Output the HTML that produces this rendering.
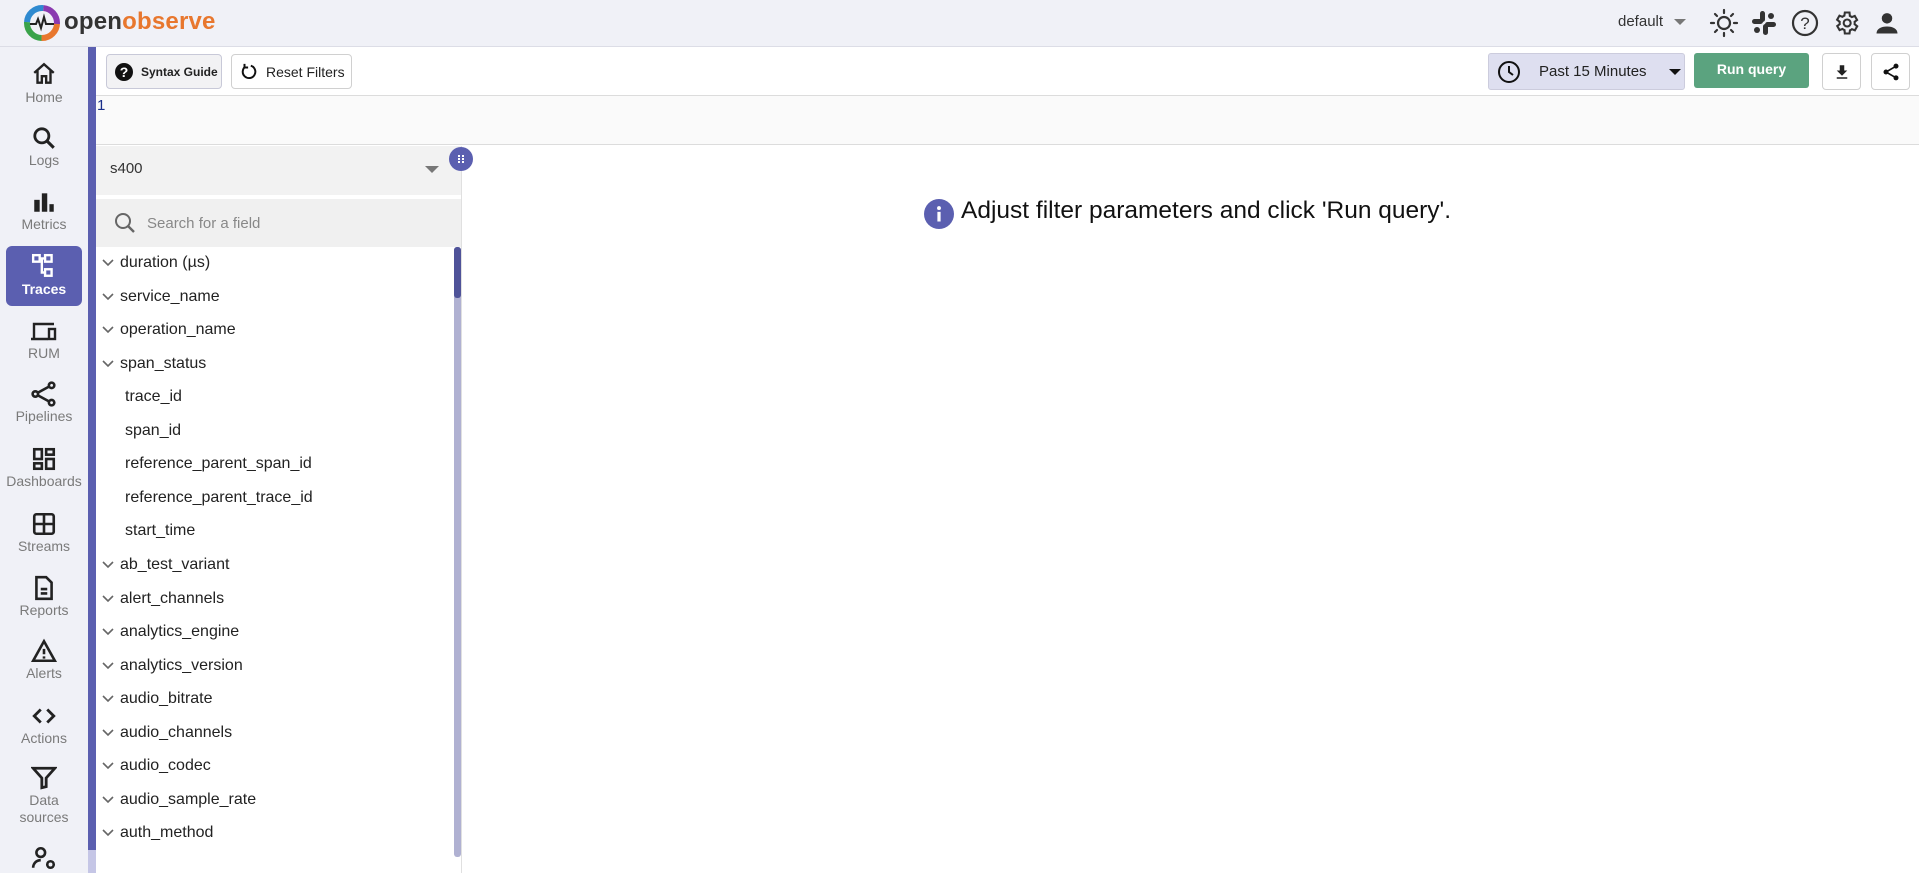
<!DOCTYPE html>
<html><head><meta charset="utf-8"><style>
*{box-sizing:border-box;margin:0;padding:0}
body{width:1919px;height:873px;overflow:hidden;font-family:"Liberation Sans",sans-serif;background:#fff;position:relative;color:#222}
.abs{position:absolute}
#hdr{left:0;top:0;width:1919px;height:47px;background:#f0f1f7;border-bottom:1px solid #dcdde6}
#side{left:0;top:47px;width:88px;height:826px;background:#f0f1f7}
#strip{left:88px;top:47px;width:8px;height:803px;background:#5b5fb0}
#strip2{left:88px;top:850px;width:8px;height:23px;background:#c5c6e6}
.nav{position:absolute;left:0;width:88px;text-align:center;color:#7a7a7a;font-size:14px;white-space:nowrap}
.ic{position:absolute;left:31px}
.btn{position:absolute;border:1px solid #d0d0d0;border-radius:4px;background:#fff;font-size:14px;display:flex;align-items:center;white-space:nowrap}
.f{position:absolute;left:120px;font-size:16px;color:#222}
.c{position:absolute;left:102px;width:12px;height:8px}
.s{left:125px}
</style></head><body>
<div id="hdr" class="abs"></div>
<svg class="abs" style="left:23px;top:4px" width="38" height="38" viewBox="0 0 38 38">
<circle cx="19" cy="19" r="15" fill="none" stroke="#e8772e" stroke-width="6" stroke-dasharray="24 71"/>
<circle cx="19" cy="19" r="15" fill="none" stroke="#3aa34a" stroke-width="6" stroke-dasharray="24 71" stroke-dashoffset="-24"/>
<circle cx="19" cy="19" r="15" fill="none" stroke="#2f8ad0" stroke-width="6" stroke-dasharray="24 71" stroke-dashoffset="-48"/>
<circle cx="19" cy="19" r="15" fill="none" stroke="#8a3ab0" stroke-width="6" stroke-dasharray="24 71" stroke-dashoffset="-72"/>
<path d="M7 20h6l2-5 3 9 3-11 2 7h8" fill="none" stroke="#222" stroke-width="2"/></svg>
<div class="abs" style="left:64px;top:8px;font-size:24px;font-weight:bold;letter-spacing:0.2px"><span style="color:#333">open</span><span style="color:#e8772e">observe</span></div>
<div class="abs" style="left:1618px;top:13px;font-size:15px;color:#333">default</div>
<div class="abs" style="left:1674px;top:19px;border:6px solid transparent;border-top:6px solid #777"></div>
<svg class="abs" style="left:1709px;top:8px" width="30" height="30" viewBox="0 0 30 30"><circle cx="15" cy="15" r="6" fill="none" stroke="#333" stroke-width="2.2"/><g stroke="#333" stroke-width="2.2" stroke-linecap="round"><path d="M15 2v3M15 25v3M2 15h3M25 15h3M6 6l2 2M22 22l2 2M6 24l2-2M22 8l2-2"/></g></svg>
<svg class="abs" style="left:1751px;top:10px" width="26" height="26" viewBox="0 0 26 26" fill="#333"><rect x="9" y="1" width="5" height="11" rx="2.5"/><rect x="1" y="9" width="11" height="5" rx="2.5"/><rect x="12" y="14" width="5" height="11" rx="2.5"/><rect x="14" y="12" width="11" height="5" rx="2.5"/><circle cx="20" cy="6" r="3"/><circle cx="6" cy="20" r="3"/></svg>
<svg class="abs" style="left:1791px;top:9px" width="28" height="28" viewBox="0 0 28 28"><circle cx="14" cy="14" r="12" fill="none" stroke="#333" stroke-width="2.2"/><text x="14" y="20" text-anchor="middle" font-size="17" font-family="Liberation Sans" fill="#333">?</text></svg>
<svg class="abs" style="left:1832px;top:9px" width="28" height="28" viewBox="0 0 24 24"><path d="M19.4 13a7.5 7.5 0 000-2l2.1-1.6-2-3.5-2.5 1a7 7 0 00-1.7-1L15 3h-4l-.4 2.7a7 7 0 00-1.7 1l-2.5-1-2 3.5L6.6 11a7.5 7.5 0 000 2l-2.1 1.6 2 3.5 2.5-1a7 7 0 001.7 1L11 21h4l.4-2.7a7 7 0 001.7-1l2.5 1 2-3.5z" fill="none" stroke="#333" stroke-width="1.8"/><circle cx="13" cy="12" r="3" fill="none" stroke="#333" stroke-width="1.8"/></svg>
<svg class="abs" style="left:1873px;top:9px" width="28" height="28" viewBox="0 0 24 24" fill="#333"><circle cx="12" cy="8" r="4.5"/><path d="M3 21c0-4 4-6 9-6s9 2 9 6z"/></svg>

<div id="side" class="abs"></div>
<div id="strip" class="abs"></div><div id="strip2" class="abs"></div>
<svg class="ic" style="top:61px" width="26" height="26" viewBox="0 0 24 24"><path d="M3 11L12 3l9 8M6 9v11h4v-6h4v6h4V9" fill="none" stroke="#222" stroke-width="2.2"/></svg><div class="nav" style="top:89px">Home</div>
<svg class="ic" style="top:125px" width="26" height="26" viewBox="0 0 24 24"><circle cx="10" cy="10" r="6.5" fill="none" stroke="#222" stroke-width="2.6"/><path d="M15 15l6 6" stroke="#222" stroke-width="2.8"/></svg><div class="nav" style="top:152px">Logs</div>
<svg class="ic" style="top:189px" width="26" height="26" viewBox="0 0 24 24" fill="#222"><rect x="3" y="10" width="5" height="11"/><rect x="10" y="4" width="5" height="17"/><rect x="17" y="14" width="4" height="7"/></svg><div class="nav" style="top:216px">Metrics</div>
<div class="abs" style="left:6px;top:246px;width:76px;height:60px;background:#5b5fb0;border-radius:6px"></div>
<svg class="ic" style="top:253px" width="26" height="26" viewBox="0 0 24 24" fill="none" stroke="#fff" stroke-width="2.2"><rect x="2" y="2" width="6" height="6"/><rect x="13" y="2" width="6" height="6"/><rect x="13" y="15" width="6" height="6"/><path d="M8 5h5M10 5v13h3"/></svg><div class="nav" style="top:281px;color:#fff;font-weight:bold">Traces</div>
<svg class="ic" style="left:30px;top:320px" width="28" height="24" viewBox="0 0 28 24" fill="none" stroke="#222" stroke-width="2.4"><path d="M4 18V4h20M1 19h17"/><rect x="19" y="9" width="6" height="10"/></svg><div class="nav" style="top:345px">RUM</div>
<svg class="ic" style="top:381px" width="26" height="26" viewBox="0 0 24 24" fill="none" stroke="#222" stroke-width="2.4"><circle cx="4" cy="12" r="2.5"/><circle cx="19" cy="4" r="2.5"/><circle cx="19" cy="20" r="2.5"/><path d="M6 11l11-6M6 13l11 6"/></svg><div class="nav" style="top:408px">Pipelines</div>
<svg class="ic" style="top:446px" width="26" height="26" viewBox="0 0 24 24" fill="none" stroke="#222" stroke-width="2.4"><rect x="3" y="3" width="7" height="9"/><rect x="14" y="3" width="7" height="5"/><rect x="3" y="16" width="7" height="5"/><rect x="14" y="12" width="7" height="9"/></svg><div class="nav" style="top:473px">Dashboards</div>
<svg class="ic" style="top:511px" width="26" height="26" viewBox="0 0 24 24" fill="none" stroke="#222" stroke-width="2.4"><rect x="3" y="3" width="18" height="18" rx="2"/><path d="M12 3v18M3 12h18"/></svg><div class="nav" style="top:538px">Streams</div>
<svg class="ic" style="top:575px" width="26" height="26" viewBox="0 0 24 24" fill="none" stroke="#222" stroke-width="2.4"><path d="M5 2h9l5 5v15H5z"/><path d="M9 13h6M9 17h6"/></svg><div class="nav" style="top:602px">Reports</div>
<svg class="ic" style="left:30px;top:638px" width="28" height="26" viewBox="0 0 24 24" fill="none" stroke="#222" stroke-width="2.4"><path d="M12 3L2 21h20z"/><path d="M12 10v5M12 17v2"/></svg><div class="nav" style="top:665px">Alerts</div>
<svg class="ic" style="top:703px" width="26" height="26" viewBox="0 0 24 24" fill="none" stroke="#222" stroke-width="2.6"><path d="M9 6l-6 6 6 6M15 6l6 6-6 6"/></svg><div class="nav" style="top:730px">Actions</div>
<svg class="ic" style="top:765px" width="26" height="26" viewBox="0 0 24 24"><path d="M2 3h20l-8 9v8l-4 1v-9z" fill="none" stroke="#222" stroke-width="2.6"/></svg><div class="nav" style="top:792px;line-height:17px">Data<br>sources</div>
<svg class="abs" style="left:31px;top:845px" width="26" height="26" viewBox="0 0 24 24" fill="none" stroke="#222" stroke-width="2.4"><circle cx="9" cy="7" r="4"/><path d="M2 21c0-4 3-7 7-7"/><circle cx="18" cy="18" r="3"/></svg>

<!-- toolbar -->
<div class="abs" style="left:96px;top:95px;width:1823px;height:1px;background:#dcdcdc"></div>
<div class="btn" style="left:106px;top:54px;width:116px;height:35px;background:#f2f2f4;border-color:#c8c9d8;font-weight:bold;font-size:12px"><svg style="margin:0 7px 0 7px;flex:none" width="20" height="20" viewBox="0 0 20 20"><circle cx="10" cy="10" r="9" fill="#111"/><text x="10" y="15" text-anchor="middle" font-size="14" font-weight="bold" fill="#fff" font-family="Liberation Sans">?</text></svg>Syntax Guide</div>
<div class="btn" style="left:231px;top:54px;width:121px;height:35px"><svg style="margin:0 8px 0 8px;flex:none" width="18" height="18" viewBox="0 0 20 20" fill="none" stroke="#111" stroke-width="2.2"><path d="M6 4a7 7 0 1 0 6-1"/><path d="M5 1v4h4"/></svg>Reset Filters</div>
<div class="abs" style="left:1488px;top:53px;width:197px;height:37px;background:#dedff0;border:1px solid #ccd;border-radius:3px;font-size:15px;display:flex;align-items:center;white-space:nowrap"><svg style="margin:0 18px 0 8px;flex:none" width="24" height="24" viewBox="0 0 24 24" fill="none" stroke="#111" stroke-width="2"><circle cx="12" cy="12" r="10"/><path d="M12 6v6l4 3"/></svg>Past 15 Minutes<div style="margin-left:22px;border:6px solid transparent;border-top:6px solid #111;margin-top:6px;flex:none"></div></div>
<div class="abs" style="left:1694px;top:53px;width:115px;height:35px;background:#5ba37f;border-radius:3px;color:#fff;font-weight:bold;font-size:14px;text-align:center;line-height:33px">Run query</div>
<div class="btn" style="left:1822px;top:53px;width:39px;height:37px;justify-content:center"><svg width="18" height="18" viewBox="0 0 24 24" fill="#222"><path d="M9 3h6v7h4l-7 7-7-7h4z"/><rect x="5" y="19" width="14" height="2"/></svg></div>
<div class="btn" style="left:1871px;top:53px;width:39px;height:37px;justify-content:center"><svg width="20" height="20" viewBox="0 0 24 24"><circle cx="18" cy="5" r="3" fill="#111"/><circle cx="6" cy="12" r="3" fill="#111"/><circle cx="18" cy="19" r="3" fill="#111"/><path d="M18 5L6 12l12 7" stroke="#111" stroke-width="2" fill="none"/></svg></div>

<!-- editor -->
<div class="abs" style="left:96px;top:96px;width:1823px;height:49px;background:#fafafa;border-bottom:1px solid #dcdcdc"></div>
<div class="abs" style="left:97px;top:97px;font-size:15px;color:#1a2f8a">1</div>

<!-- field panel -->
<div class="abs" style="left:96px;top:146px;width:365px;height:49px;background:#f2f2f2"></div>
<div class="abs" style="left:110px;top:160px;font-size:15px;color:#333">s400</div>
<div class="abs" style="left:425px;top:166px;border:7px solid transparent;border-top:7px solid #777"></div>
<div class="abs" style="left:96px;top:199px;width:365px;height:48px;background:#f0f0f0"></div>
<svg class="abs" style="left:113px;top:211px" width="24" height="24" viewBox="0 0 24 24"><circle cx="10" cy="10" r="7" fill="none" stroke="#666" stroke-width="2"/><path d="M15 15l6 6" stroke="#666" stroke-width="2.4"/></svg>
<div class="abs" style="left:147px;top:215px;font-size:15px;color:#888">Search for a field</div>
<div class="abs" style="left:461px;top:146px;width:1px;height:727px;background:#e0e0e0"></div>
<div class="abs" style="left:454px;top:247px;width:7px;height:610px;background:#b0b1d2;border-radius:3px"></div>
<div class="abs" style="left:454px;top:247px;width:7px;height:51px;background:#4f5399;border-radius:3px"></div>
<svg class="abs" style="left:449px;top:147px" width="24" height="24" viewBox="0 0 24 24"><circle cx="12" cy="12" r="12" fill="#5b5fb0"/><g fill="#fff"><rect x="9" y="8" width="2" height="2"/><rect x="13" y="8" width="2" height="2"/><rect x="9" y="11" width="2" height="2"/><rect x="13" y="11" width="2" height="2"/><rect x="9" y="14" width="2" height="2"/><rect x="13" y="14" width="2" height="2"/></g></svg>

<div id="fields"></div>
<script>
var f=[["duration (µs)",1],["service_name",1],["operation_name",1],["span_status",1],["trace_id",0],["span_id",0],["reference_parent_span_id",0],["reference_parent_trace_id",0],["start_time",0],["ab_test_variant",1],["alert_channels",1],["analytics_engine",1],["analytics_version",1],["audio_bitrate",1],["audio_channels",1],["audio_codec",1],["audio_sample_rate",1],["auth_method",1]];
var h="";f.forEach(function(x,i){var y=264+i*33.55;
if(x[1])h+='<svg class="c" style="top:'+(y-5)+'px" viewBox="0 0 12 8"><path d="M1 1l5 5 5-5" fill="none" stroke="#666" stroke-width="1.6"/></svg>';
h+='<div class="f'+(x[1]?'':' s')+'" style="top:'+(y-10)+'px">'+x[0]+'</div>';});
document.getElementById("fields").innerHTML=h;
</script>

<!-- message -->
<svg class="abs" style="left:924px;top:199px" width="30" height="30" viewBox="0 0 28 28"><circle cx="14" cy="14" r="14" fill="#5b5fb0"/><rect x="12.5" y="12" width="3" height="9" fill="#fff"/><circle cx="14" cy="8.5" r="1.8" fill="#fff"/></svg>
<div class="abs" style="left:961px;top:197px;font-size:24.5px;color:#111;white-space:nowrap">Adjust filter parameters and click 'Run query'.</div>
</body></html>
